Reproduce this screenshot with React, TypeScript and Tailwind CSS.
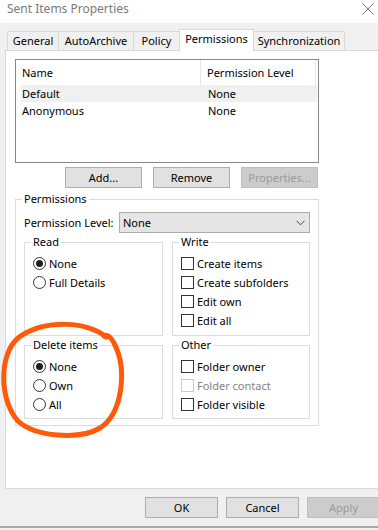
import React from "react";

const Radio = ({ checked, label }: { checked?: boolean; label: string }) => (
  <div className="flex items-center h-[19px]">
    <span className="w-[13px] h-[13px] rounded-full border border-[#333333] bg-white flex items-center justify-center">
      {checked && <span className="w-[7px] h-[7px] rounded-full bg-[#1f1f1f]" />}
    </span>
    <span className="ml-[3px]">{label}</span>
  </div>
);

const Check = ({ label, disabled }: { label: string; disabled?: boolean }) => (
  <div className="flex items-center h-[19px]">
    <span
      className={`w-[13px] h-[13px] border bg-white ${disabled ? "border-[#cccccc]" : "border-[#333333]"}`}
    />
    <span className={`ml-[3px] ${disabled ? "text-[#838383]" : ""}`}>{label}</span>
  </div>
);

const Group = ({
  title,
  className,
  children,
}: {
  title: string;
  className: string;
  children: React.ReactNode;
}) => (
  <fieldset className={`border border-[#dcdcdc] p-0 m-0 ${className}`}>
    <legend className="ml-[6px] px-[2px] leading-[16px]">{title}</legend>
    {children}
  </fieldset>
);

const WinButton = ({
  label,
  width,
  disabled,
}: {
  label: string;
  width: string;
  disabled?: boolean;
}) => (
  <div
    className={`${width} h-[21px] shrink-0 flex items-center justify-center border ${
      disabled
        ? "bg-[#cccccc] border-[#bfbfbf] text-[#9a9a9a]"
        : "bg-[#e1e1e1] border-[#adadad] text-black"
    }`}
  >
    {label}
  </div>
);

export default function App() {
  const tabs = [
    { name: "General", w: "w-[51px]" },
    { name: "AutoArchive", w: "w-[75px]" },
    { name: "Policy", w: "w-[46px]" },
  ];

  return (
    <div className="relative w-[378px] h-[530px] overflow-hidden bg-[#f0f0f0] font-['Noto_Sans',sans-serif] text-[11px] leading-[16px] text-black">
      {/* title bar */}
      <div className="h-[23px] bg-white flex items-start justify-between pl-[7px] pr-[4px]">
        <span className="text-[12px] leading-[17px] text-[#7a7a7a]">Sent Items Properties</span>
        <svg width="12" height="12" viewBox="0 0 12 12" className="mt-[3px]">
          <path d="M0.5 0.5 L11.5 11.5 M11.5 0.5 L0.5 11.5" stroke="#7a7a7a" strokeWidth="1" />
        </svg>
      </div>

      {/* tabs */}
      <div className="flex items-end h-[27px] pl-[7px]">
        {tabs.map((t) => (
          <div
            key={t.name}
            className={`${t.w} h-[19px] border border-b-0 border-r-0 border-[#d9d9d9] flex items-center justify-center`}
          >
            {t.name}
          </div>
        ))}
        <div className="relative z-10 w-[75px] h-[22px] -mb-px bg-white border border-b-0 border-[#d9d9d9] flex items-start justify-center pt-[1px]">
          Permissions
        </div>
        <div className="w-[91px] h-[19px] border border-b-0 border-l-0 border-[#d9d9d9] flex items-center justify-center">
          Synchronization
        </div>
      </div>

      {/* tab page */}
      <div className="ml-[5px] h-[439px] bg-white border border-r-0 border-[#d9d9d9] pt-[8px] pl-[9px]">
        {/* list */}
        <div className="w-[304px] h-[104px] border border-[#828790]">
          <div className="flex h-[25px] items-center">
            <div className="w-[185px] h-full pl-[6px] flex items-center border-r border-[#e5e5e5]">Name</div>
            <div className="w-[115px] h-full pl-[6px] flex items-center border-r border-[#e5e5e5]">
              Permission Level
            </div>
          </div>
          <div className="ml-[5px] mr-[1px] flex h-[17px] items-center bg-[#f0f0f0]">
            <div className="w-[180px] pl-[1px]">Default</div>
            <div className="pl-[7px]">None</div>
          </div>
          <div className="ml-[5px] mr-[1px] flex h-[17px] items-center">
            <div className="w-[180px] pl-[1px]">Anonymous</div>
            <div className="pl-[7px]">None</div>
          </div>
        </div>

        {/* buttons */}
        <div className="flex gap-[11px] pl-[50px] mt-[4px]">
          <WinButton label="Add..." width="w-[77px]" />
          <WinButton label="Remove" width="w-[77px]" />
          <WinButton label="Properties..." width="w-[77px]" disabled />
        </div>

        {/* permissions group */}
        <Group title="Permissions" className="w-[304px] mt-[3px]">
          <div className="pl-[8px] pr-[8px] pb-[6px]">
            <div className="flex items-center mt-[5px] h-[21px]">
              <span className="w-[95px]">Permission Level:</span>
              <div className="w-[191px] h-[21px] bg-[#e5e5e5] border border-[#acacac] flex items-center justify-between pl-[3px] pr-[4px]">
                <span>None</span>
                <svg width="9" height="6" viewBox="0 0 9 6">
                  <path d="M0.5 0.8 L4.5 4.8 L8.5 0.8" fill="none" stroke="#444444" strokeWidth="1" />
                </svg>
              </div>
            </div>

            <div className="flex gap-[9px] mt-[1px]">
              <Group title="Read" className="w-[139px] h-[102px]">
                <div className="pl-[8px] pt-[4px]">
                  <Radio checked label="None" />
                  <Radio label="Full Details" />
                </div>
              </Group>
              <Group title="Write" className="w-[138px] h-[102px]">
                <div className="pl-[8px] pt-[4px]">
                  <Check label="Create items" />
                  <Check label="Create subfolders" />
                  <Check label="Edit own" />
                  <Check label="Edit all" />
                </div>
              </Group>
            </div>

            <div className="flex gap-[9px] mt-[1px]">
              <Group title="Delete items" className="w-[139px] h-[82px]">
                <div className="pl-[8px] pt-[4px]">
                  <Radio checked label="None" />
                  <Radio label="Own" />
                  <Radio label="All" />
                </div>
              </Group>
              <Group title="Other" className="w-[138px] h-[82px]">
                <div className="pl-[8px] pt-[4px]">
                  <Check label="Folder owner" />
                  <Check label="Folder contact" disabled />
                  <Check label="Folder visible" />
                </div>
              </Group>
            </div>
          </div>
        </Group>
      </div>

      {/* bottom bar */}
      <div className="h-[37px] flex items-start pt-[8px] pl-[145px] gap-[8px]">
        <WinButton label="OK" width="w-[73px]" />
        <WinButton label="Cancel" width="w-[73px]" />
        <WinButton label="Apply" width="w-[73px]" disabled />
      </div>
      <div className="h-[2px] bg-[#a9a9a9]" />

      {/* hand-drawn annotation */}
      <svg
        className="absolute left-0 top-0 pointer-events-none"
        width="378"
        height="530"
        viewBox="0 0 378 530"
      >
        <path
          d="M106 337 C 90 322, 45 318, 18 338 C -1 354, -1 400, 18 421 C 35 437, 80 440, 100 428 C 122 414, 128 370, 114 343 C 111 337, 107 334, 104 336"
          fill="none"
          stroke="#ff5a0a"
          strokeWidth="5"
          strokeLinecap="round"
        />
      </svg>
    </div>
  );
}
